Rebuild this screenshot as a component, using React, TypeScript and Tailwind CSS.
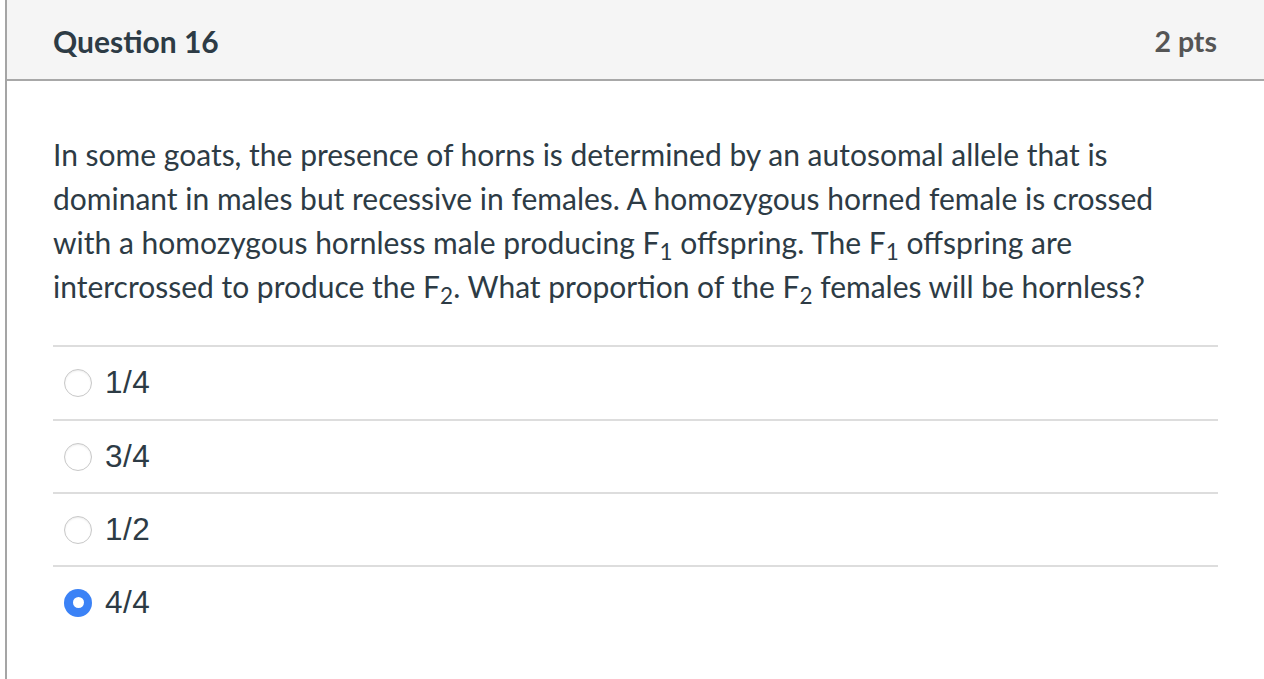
import React from "react";

const options = [
  { label: "1/4", checked: false },
  { label: "3/4", checked: false },
  { label: "1/2", checked: false },
  { label: "4/4", checked: true },
];

function Radio({ checked }: { checked: boolean }) {
  if (checked) {
    return (
      <span className="flex h-[28px] w-[28px] shrink-0 items-center justify-center rounded-full bg-[#3b82f6]">
        <span className="h-[11px] w-[11px] rounded-full bg-white" />
      </span>
    );
  }
  return (
    <span className="h-[28px] w-[28px] shrink-0 rounded-full border border-[#c8c8c8] bg-white shadow-[inset_0_1px_2px_rgba(0,0,0,0.08)]" />
  );
}

export default function App() {
  return (
    <div className="h-[679px] w-[1264px] overflow-hidden bg-white pl-[5px] font-['Lato',sans-serif] text-[#2d3b45]">
      <div className="h-full border-l-2 border-[#a5a5a5]">
        <div className="flex h-[81px] items-center justify-between border-b-2 border-[#a8a8a8] bg-[#f5f5f5] pl-[46px] pr-[47px] pt-[4px]">
          <h2 className="text-[30px] font-bold text-[#2d3b45]">Question 16</h2>
          <div className="text-[28.5px] font-bold text-[#555555]">2 pts</div>
        </div>
        <div className="pl-[46px] pr-[46px] pt-[51px]">
          <p className="whitespace-nowrap text-[30px] leading-[44px]">
            In some goats, the presence of horns is determined by an autosomal allele that is
            <br />
            dominant in males but recessive in females. A homozygous horned female is crossed
            <br />
            with a homozygous hornless male producing F<sub>1</sub> offspring. The F<sub>1</sub> offspring are
            <br />
            intercrossed to produce the F<sub>2</sub>. What proportion of the F<sub>2</sub> females will be hornless?
          </p>
          <div className="mt-[37px]">
            {options.map((o, i) => (
              <div
                key={o.label}
                className={`flex items-center gap-[13px] border-t-2 border-[#dddddd] pl-[11px] ${i === 0 ? "h-[74px]" : "h-[73px]"}`}
              >
                <Radio checked={o.checked} />
                <span className="font-['Liberation_Sans',Arial,sans-serif] text-[31.5px] tracking-[0.5px]">{o.label}</span>
              </div>
            ))}
          </div>
        </div>
      </div>
    </div>
  );
}
